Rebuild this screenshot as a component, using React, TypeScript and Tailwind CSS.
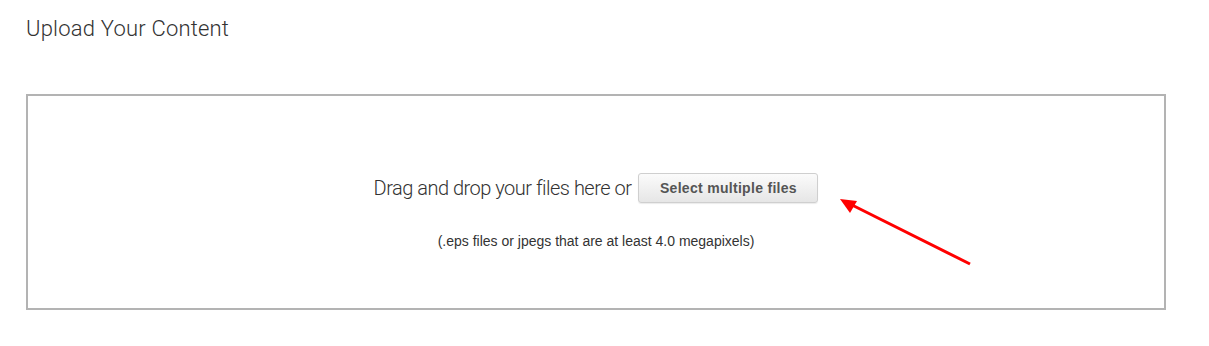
export default function App() {
  return (
    <div className="relative h-[346px] w-[1209px] bg-white px-[26px] pt-[14px]">
      <h1 className="font-['Roboto',sans-serif] text-[22px] font-light leading-[30px] tracking-[0.2px] text-[#333]">
        Upload Your Content
      </h1>
      <div className="mt-[50px] flex h-[216px] w-[1140px] flex-col items-center border-2 border-[#b3b3b3] pt-[77px]">
        <div className="flex items-center gap-[7px]">
          <span className="font-['Roboto',sans-serif] text-[20px] font-light tracking-[-0.5px] text-[#333]">
            Drag and drop your files here or
          </span>
          <button className="h-[30px] w-[180px] rounded-[3px] border border-[#cfcfcf] bg-gradient-to-b from-[#fbfbfb] to-[#e6e6e6] font-['Liberation_Sans',sans-serif] text-[14px] font-bold tracking-[0.3px] text-[#555] shadow-[0_1px_1px_rgba(0,0,0,0.08)]">
            Select multiple files
          </button>
        </div>
        <p className="mt-[30px] font-['Liberation_Sans',sans-serif] text-[14px] leading-[16px] text-[#333]">
          (.eps files or jpegs that are at least 4.0 megapixels)
        </p>
      </div>
      <svg
        className="absolute left-[836px] top-[192px]"
        width="140"
        height="80"
        viewBox="0 0 140 80"
      >
        <line x1="134" y1="72" x2="14" y2="12" stroke="#ff0000" strokeWidth="3" />
        <polygon points="4,7 21,9 14,21" fill="#ff0000" />
      </svg>
    </div>
  );
}
